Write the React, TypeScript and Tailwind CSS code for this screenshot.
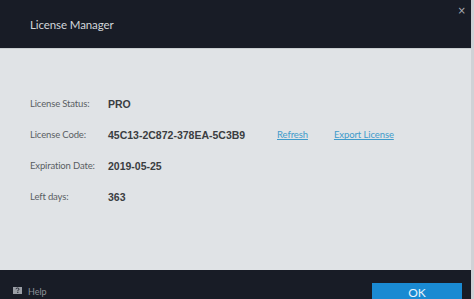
import React from "react";

const lato = { fontFamily: "Lato, 'Liberation Sans', sans-serif" } as const;

function Row({ label, value, children }: { label: string; value: string; children?: React.ReactNode }) {
  return (
    <div className="flex h-[31px] items-center">
      <div className="w-[78px] text-[9.5px] tracking-[-0.15px] text-[#5a5e63]" style={lato}>{label}</div>
      <div className="w-[169px] text-[10.5px] font-bold text-[#3a3d41] font-['Liberation_Sans',sans-serif]">{value}</div>
      {children}
    </div>
  );
}

export default function App() {
  return (
    <div className="flex h-[299px] w-[474px] overflow-hidden">
      <div className="flex w-[471px] flex-col">
        <div className="relative flex h-[48px] items-center bg-[#181c26] pl-[30px] pt-[1px]">
          <span className="text-[11.5px] tracking-[-0.1px] text-[#d3d6db]" style={lato}>License Manager</span>
          <span className="absolute right-[5px] top-[6px] text-[10px] leading-none text-[#a9adb4] font-['DejaVu_Sans',sans-serif]">×</span>
        </div>
        <div className="h-px bg-[#c9cdd1]" />
        <div className="flex flex-1 flex-col bg-[#e0e3e6] pl-[30px] pt-[40px]">
          <Row label="License Status:" value="PRO" />
          <Row label="License Code:" value="45C13-2C872-378EA-5C3B9">
            <div className="flex gap-[26px] text-[9.5px] tracking-[-0.1px] text-[#3f9bcb] underline" style={lato}>
              <span>Refresh</span>
              <span>Export License</span>
            </div>
          </Row>
          <Row label="Expiration Date:" value="2019-05-25" />
          <Row label="Left days:" value="363" />
        </div>
        <div className="flex h-[29px] bg-[#181c26]">
          <div className="flex items-end pb-[1px] pl-[13px]">
            <div className="flex items-center gap-[6px]">
              <svg width="9" height="8" viewBox="0 0 9 8">
                <rect x="0" y="0" width="9" height="7" fill="#9a9ea5" />
                <path d="M3 2.2 Q3 1 4.5 1 Q6 1 6 2.2 Q6 3 4.8 3.5 L4.8 4.3" stroke="#181c26" strokeWidth="0.9" fill="none" />
                <rect x="4.3" y="5" width="1" height="1" fill="#181c26" />
              </svg>
              <span className="text-[9px] text-[#8d9197]" style={lato}>Help</span>
            </div>
          </div>
          <div className="flex-1" />
          <div className="mr-[9px] mt-[13px] flex h-[16px] w-[90px] items-start justify-center bg-[#1a8ad2] pt-[4px]">
            <span className="text-[12px] leading-none text-[#e8f3fb]" style={lato}>OK</span>
          </div>
        </div>
      </div>
      <div className="w-[3px] bg-[#cfd2d6]" />
    </div>
  );
}
